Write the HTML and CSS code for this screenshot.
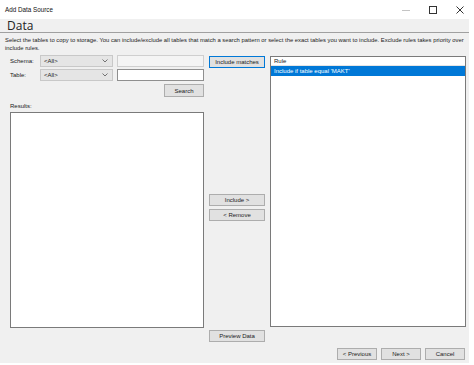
FILE: index.html
```html
<!DOCTYPE html>
<html>
<head>
<meta charset="utf-8">
<link rel="stylesheet" href="styles.css">
</head>
<body>
<div class="window">
  <div class="titlebar">
    <span class="title">Add Data Source</span>
    <div class="controls">
      <svg class="ctl" width="10" height="10" viewBox="0 0 10 10"><line x1="1" y1="5.5" x2="9" y2="5.5" stroke="#c4c4c4" stroke-width="1"/></svg>
      <svg class="ctl" width="10" height="10" viewBox="0 0 10 10"><rect x="1.5" y="1.5" width="7" height="7" fill="none" stroke="#333" stroke-width="1"/></svg>
      <svg class="ctl" width="10" height="10" viewBox="0 0 10 10"><path d="M1.5 1.5 L8.5 8.5 M8.5 1.5 L1.5 8.5" stroke="#333" stroke-width="1"/></svg>
    </div>
  </div>
  <div class="header">Data</div>
  <p class="desc">Select the tables to copy to storage. You can include/exclude all tables that match a search pattern or select the exact tables you want to include. Exclude rules takes priority over include rules.</p>
  <div class="main">
    <div class="left">
      <div class="row">
        <span class="label">Schema:</span>
        <div class="combo"><span>&lt;All&gt;</span><svg width="6" height="4" viewBox="0 0 6 4"><path d="M0.5 0.5 L3 3 L5.5 0.5" fill="none" stroke="#555" stroke-width="0.8"/></svg></div>
        <div class="input disabled"></div>
      </div>
      <div class="row">
        <span class="label">Table:</span>
        <div class="combo"><span>&lt;All&gt;</span><svg width="6" height="4" viewBox="0 0 6 4"><path d="M0.5 0.5 L3 3 L5.5 0.5" fill="none" stroke="#555" stroke-width="0.8"/></svg></div>
        <div class="input"></div>
      </div>
      <div class="search-row"><button class="btn search">Search</button></div>
      <div class="results-label">Results:</div>
      <div class="listbox results"></div>
    </div>
    <div class="mid">
      <button class="btn focused">Include matches</button>
      <div class="mid-group">
        <button class="btn">Include &gt;</button>
        <button class="btn">&lt; Remove</button>
      </div>
      <button class="btn">Preview Data</button>
    </div>
    <div class="right">
      <div class="listbox rules">
        <div class="rule-head">Rule</div>
        <div class="rule-row selected">Include if table equal 'MAKT'</div>
      </div>
    </div>
  </div>
  <div class="footer">
    <button class="btn">&lt; Previous</button>
    <button class="btn">Next &gt;</button>
    <button class="btn">Cancel</button>
  </div>
</div>
</body>
</html>
```
FILE: styles.css
```css
* { box-sizing: border-box; }
html, body { margin: 0; padding: 0; background: #fff; }
body {
  font-family: "Liberation Sans", Arial, sans-serif;
  font-size: 6px;
  color: #1a1a1a;
}
.window {
  width: 469px;
  height: 363px;
  background: #f0f0f0;
  display: flex;
  flex-direction: column;
}
.titlebar {
  height: 19px;
  background: #fff;
  display: flex;
  align-items: center;
  padding-left: 5px;
}
.title { font-size: 6.3px; color: #111; }
.controls {
  margin-left: auto;
  display: flex;
  gap: 17px;
  padding-right: 4px;
}
.header {
  height: 14px;
  font-size: 12px;
  line-height: 14px;
  padding-left: 7px;
  color: #222;
  border-bottom: 1px solid #a0a0a0;
  font-family: "Open Sans", "Liberation Sans", sans-serif;
}
.desc {
  margin: 0;
  padding: 3px 3px 0 5px;
  line-height: 8px;
  height: 22px;
  font-size: 5.85px;
}
.main {
  display: flex;
  padding-left: 10px;
  height: 288px;
}
.left {
  width: 194px;
  display: flex;
  flex-direction: column;
}
.row {
  display: flex;
  align-items: center;
  height: 12px;
  margin-bottom: 2px;
}
.label { width: 30px; }
.combo {
  width: 73px;
  height: 12px;
  background: #e5e5e5;
  border: 1px solid #c8c8c8;
  display: flex;
  align-items: center;
  justify-content: space-between;
  padding: 0 4px 0 3px;
  margin-right: 4px;
}
.input {
  flex: 1;
  height: 12px;
  background: #fff;
  border: 1px solid #8f8f8f;
}
.input.disabled { background: #f4f4f4; border-color: #cfcfcf; }
.search-row { display: flex; justify-content: flex-end; margin-top: 1px; }
.btn {
  font-family: "Liberation Sans", Arial, sans-serif;
  font-size: 6px;
  color: #1a1a1a;
  background: #e1e1e1;
  border: 1px solid #adadad;
  height: 12px;
  padding: 0;
  margin: 0;
  width: 40px;
}
.search { width: 40px; height: 13px; }
.results-label { margin-top: 5px; height: 10px; line-height: 8px; }
.listbox {
  background: #fff;
  border: 1px solid #7a7a7a;
}
.results { height: 216px; }
.mid {
  width: 56px;
  margin-left: 5px;
  display: flex;
  flex-direction: column;
  padding-top: 1px;
}
.mid .btn { width: 56px; }
.btn.focused { border-color: #0078d7; }
.mid-group {
  margin-top: 126px;
  display: flex;
  flex-direction: column;
  gap: 3px;
}
.mid > .btn:last-child { margin-top: auto; margin-bottom: 1px; }
.right {
  width: 196px;
  margin-left: 5px;
  padding-top: 1px;
}
.rules { height: 271px; }
.rule-head {
  height: 9px;
  line-height: 9px;
  padding-left: 3px;
  border-bottom: 1px solid #e5e5e5;
}
.rule-row {
  height: 10px;
  line-height: 10px;
  padding-left: 3px;
}
.rule-row.selected { background: #0078d7; color: #fff; }
.footer {
  display: flex;
  justify-content: flex-end;
  gap: 4px;
  padding-right: 4px;
  margin-top: 5px;
}
```
